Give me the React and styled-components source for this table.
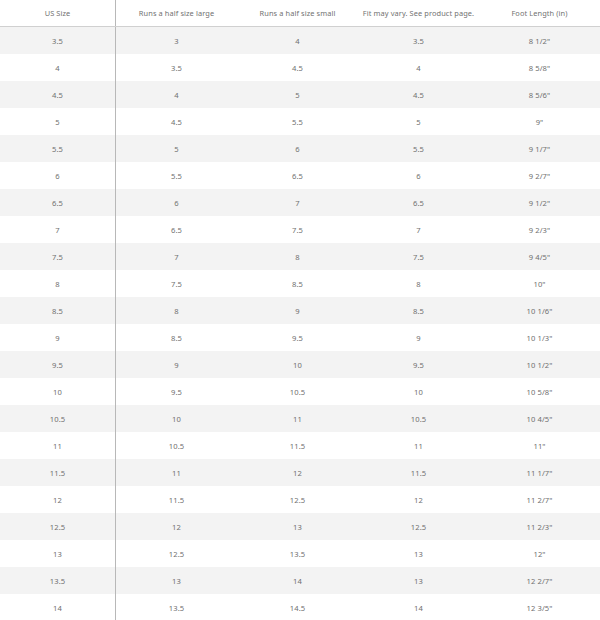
import React from 'react';
import styled, { createGlobalStyle } from 'styled-components';

const rows = [
  ['3.5', '3', '4', '3.5', '8 1/2"'],
  ['4', '3.5', '4.5', '4', '8 5/8"'],
  ['4.5', '4', '5', '4.5', '8 5/6"'],
  ['5', '4.5', '5.5', '5', '9"'],
  ['5.5', '5', '6', '5.5', '9 1/7"'],
  ['6', '5.5', '6.5', '6', '9 2/7"'],
  ['6.5', '6', '7', '6.5', '9 1/2"'],
  ['7', '6.5', '7.5', '7', '9 2/3"'],
  ['7.5', '7', '8', '7.5', '9 4/5"'],
  ['8', '7.5', '8.5', '8', '10"'],
  ['8.5', '8', '9', '8.5', '10 1/6"'],
  ['9', '8.5', '9.5', '9', '10 1/3"'],
  ['9.5', '9', '10', '9.5', '10 1/2"'],
  ['10', '9.5', '10.5', '10', '10 5/8"'],
  ['10.5', '10', '11', '10.5', '10 4/5"'],
  ['11', '10.5', '11.5', '11', '11"'],
  ['11.5', '11', '12', '11.5', '11 1/7"'],
  ['12', '11.5', '12.5', '12', '11 2/7"'],
  ['12.5', '12', '13', '12.5', '11 2/3"'],
  ['13', '12.5', '13.5', '13', '12"'],
  ['13.5', '13', '14', '13', '12 2/7"'],
  ['14', '13.5', '14.5', '14', '12 3/5"'],
];

const headers = [
  'US Size',
  'Runs a half size large',
  'Runs a half size small',
  'Fit may vary. See product page.',
  'Foot Length (in)',
];

const GlobalStyle = createGlobalStyle`
  body {
    margin: 0;
    background: #fff;
    font-family: "Noto Sans", "Open Sans", sans-serif;
  }
`;

const Table = styled.div`
  width: 600px;
  display: flex;
  flex-direction: column;
`;

const Row = styled.div`
  display: grid;
  grid-template-columns: 116px 1fr 1fr 1fr 1fr;
  height: ${p => (p.head ? 26 : 27)}px;
  background: ${p => (p.shaded ? '#f3f3f3' : '#fff')};
  border-bottom: ${p => (p.head ? '1px solid #d0d0d0' : 'none')};
`;

const Cell = styled.div`
  display: flex;
  align-items: center;
  justify-content: center;
  font-size: ${p => (p.head ? '7.4px' : '7.6px')};
  color: ${p => (p.head ? '#727272' : '#707070')};
  letter-spacing: 0.1px;
  border-right: ${p => (p.first ? '1px solid #b8b8b8' : 'none')};
  white-space: nowrap;
`;

export default function App() {
  return (
    <>
      <GlobalStyle />
      <Table>
        <Row head>
          {headers.map((h, i) => (
            <Cell head first={i === 0} key={h}>{h}</Cell>
          ))}
        </Row>
        {rows.map((r, ri) => (
          <Row key={ri} shaded={ri % 2 === 0}>
            {r.map((v, ci) => (
              <Cell key={ci} first={ci === 0}>{v}</Cell>
            ))}
          </Row>
        ))}
      </Table>
    </>
  );
}
